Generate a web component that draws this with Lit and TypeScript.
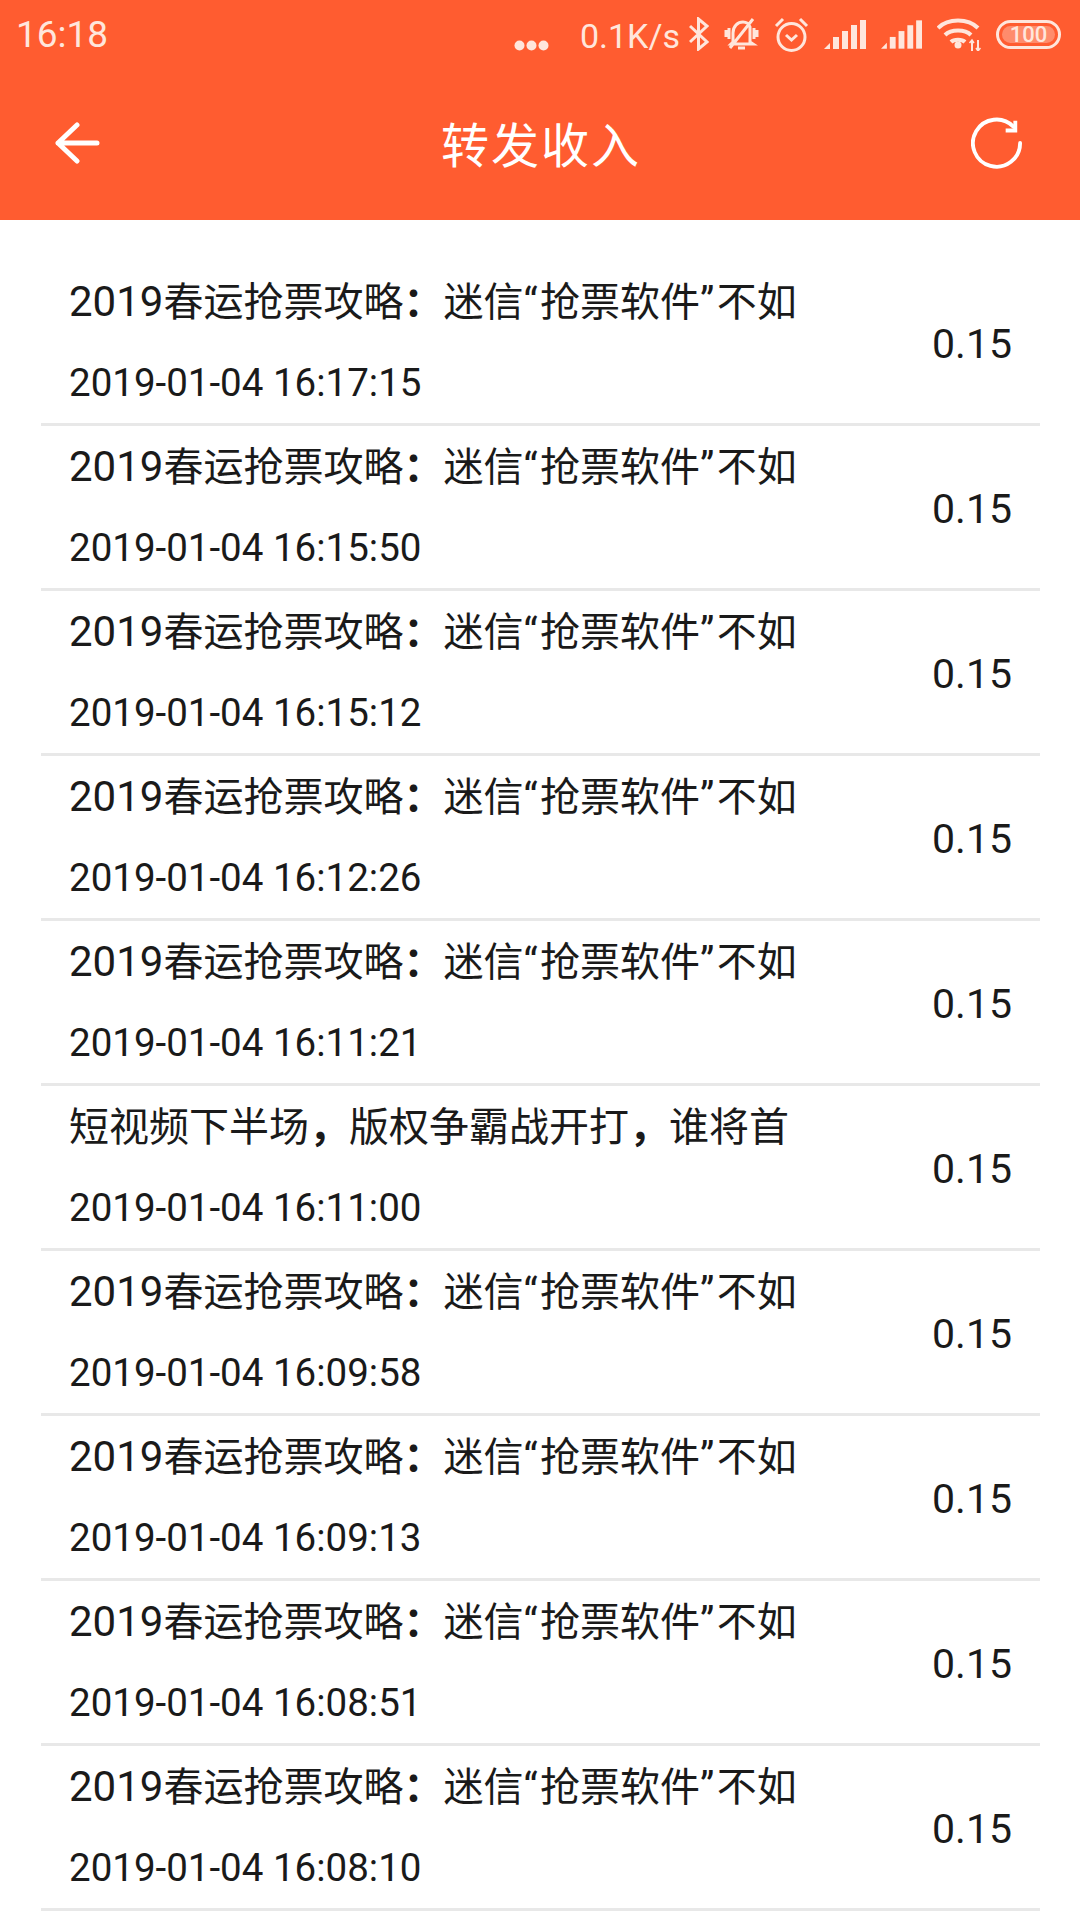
import {html, css, LitElement, svg} from 'lit';
import {customElement} from 'lit/decorators.js';

const T1 = html`<span class="num">2019</span>春运抢票攻略<b>\uFF1A</b>迷信<span class="quote">\u201C</span>抢票软件<span class="quote">\u201D</span>不如`;
const T2 = html`短视频下半场<b>\uFF0C</b>版权争霸战开打<b>\uFF0C</b>谁将首`;

const rows = [
  [T1, '2019-01-04 16:17:15'],
  [T1, '2019-01-04 16:15:50'],
  [T1, '2019-01-04 16:15:12'],
  [T1, '2019-01-04 16:12:26'],
  [T1, '2019-01-04 16:11:21'],
  [T2, '2019-01-04 16:11:00'],
  [T1, '2019-01-04 16:09:58'],
  [T1, '2019-01-04 16:09:13'],
  [T1, '2019-01-04 16:08:51'],
  [T1, '2019-01-04 16:08:10'],
];

const signal = svg`
  <path d="M0 29 6 23V29Z"/>
  <rect x="9" y="17" width="6" height="12"/>
  <rect x="18" y="11" width="6" height="18"/>
  <rect x="27" y="5" width="6" height="24"/>
  <rect x="36" y="0" width="6" height="29"/>`;

@customElement('app-root')
export class AppRoot extends LitElement {
  static styles = css`
    :host {
      display: block;
      width: 1080px;
      height: 1920px;
      overflow: hidden;
      background: #fff;
      font-family: Roboto, 'Noto Sans CJK SC', sans-serif;
    }

    .top {
      background: #ff5c30;
      color: #fff;
      height: 220px;
    }

    .status {
      height: 68px;
      display: flex;
      align-items: center;
      justify-content: space-between;
      padding: 0 19px 0 16px;
      color: #ffe6dc;
    }

    .clock {
      font-size: 37px;
    }

    .indicators {
      display: flex;
      align-items: center;
      gap: 15px;
    }

    .indicators svg {
      display: block;
    }

    .dots {
      margin-top: 22px;
    }

    .speed {
      font-size: 34px;
      margin: 4px -6px 0 16px;
    }

    .nav {
      height: 152px;
      display: flex;
      align-items: center;
      justify-content: space-between;
      padding: 0 57px 0 55px;
    }

    .nav svg {
      display: block;
      margin-bottom: 2px;
    }

    .title {
      font-size: 48px;
      letter-spacing: 2px;
      margin: 0 0 5px 11px;
    }

    .list {
      padding-top: 41px;
      padding-left: 41px;
      width: 999px;
    }

    .row {
      height: 165px;
      box-sizing: border-box;
      border-bottom: 3px solid #e8e8e8;
      display: flex;
      align-items: center;
      justify-content: space-between;
      padding: 0 28px;
      color: #1a1a1a;
    }

    .head {
      font-size: 40px;
      line-height: 81px;
      white-space: nowrap;
    }

    .num {
      font-size: 42px;
    }

    .quote {
      letter-spacing: 2.500px;
    }

    .date {
      font-size: 38.500px;
      line-height: 80px;
      white-space: nowrap;
    }

    .amount {
      font-size: 41px;
      padding-top: 3px;
    }
  `;

  render() {
    return html`
      <div class="top">
        <div class="status">
          <span class="clock">16:18</span>
          <div class="indicators">
            <svg class="dots" width="35" height="11" viewBox="0 0 35 11" fill="currentColor">
              <circle cx="5.500" cy="5.500" r="5"/><circle cx="17.500" cy="5.500" r="5"/><circle cx="29.500" cy="5.500" r="5"/>
            </svg>
            <span class="speed">0.1K/s</span>
            <svg width="20" height="34" viewBox="0 0 20 34" fill="none" stroke="currentColor" stroke-width="3">
              <path d="M1 9 18 25 9.500 32V2L18 9 1 25"/>
            </svg>
            <svg width="35" height="34" viewBox="0 0 35 34" fill="none" stroke="currentColor" stroke-width="3">
              <path d="M9 25V16C9 9 14 5 19 5 22 5 25 7 26 10V25L29 27H7ZM14 31H21M29 2 6 31M2 13V20M5 11V22M33 13V20M30 11V22"/>
            </svg>
            <svg width="35" height="37" viewBox="0 0 35 37" fill="none" stroke="currentColor" stroke-width="3">
              <circle cx="17.500" cy="21" r="13.500"/><path d="M12 19 17.500 24 23 19M2 10 9 3M33 10 26 3"/>
            </svg>
            <svg width="42" height="29" viewBox="0 0 42 29" fill="currentColor">${signal}</svg>
            <svg width="41" height="29" viewBox="0 0 42 29" fill="currentColor">${signal}</svg>
            <svg width="44" height="34" viewBox="0 0 44 34" fill="none" stroke="currentColor" stroke-width="4">
              <path d="M1 11C11 1 31 1 41 11M8 18C14 12 28 12 34 18M14 25C17 22 25 22 28 25"/>
              <circle cx="21" cy="28" r="3.500" fill="currentColor" stroke="none"/>
              <path d="M35 23V34M41 23V34" stroke-width="2"/>
              <path d="M32.500 26 35 23 37 26M39 31 41 34 43.500 31" stroke-width="1.500"/>
            </svg>
            <svg width="65" height="29" viewBox="0 0 65 29">
              <rect x="1.500" y="1.500" width="62" height="26" rx="13" fill="none" stroke="currentColor" stroke-width="3"/>
              <rect x="6" y="6" width="53" height="17" rx="8.500" fill="currentColor" opacity=".35"/>
              <text x="32.500" y="22" text-anchor="middle" font-size="22" font-weight="500" fill="currentColor">100</text>
            </svg>
          </div>
        </div>
        <div class="nav">
          <svg width="45" height="42" viewBox="0 0 45 42" fill="none" stroke="#fff" stroke-width="5" stroke-linecap="round" stroke-linejoin="round">
            <path d="M42 21H3M22 3 3 21l19 18"/>
          </svg>
          <span class="title">转发收入</span>
          <svg width="52" height="52" viewBox="0 0 54 54" fill="none" stroke="#fff" stroke-width="4" stroke-linecap="round">
            <path d="M51 27A24.500 24.500 0 1 1 44 10"/>
            <path d="M46 4v10H36" stroke-linecap="butt"/>
          </svg>
        </div>
      </div>
      <div class="list">
        ${rows.map(([head, date]) => html`
          <div class="row">
            <div>
              <div class="head">${head}</div>
              <div class="date">${date}</div>
            </div>
            <span class="amount">0.15</span>
          </div>
        `)}
      </div>
    `;
  }
}
